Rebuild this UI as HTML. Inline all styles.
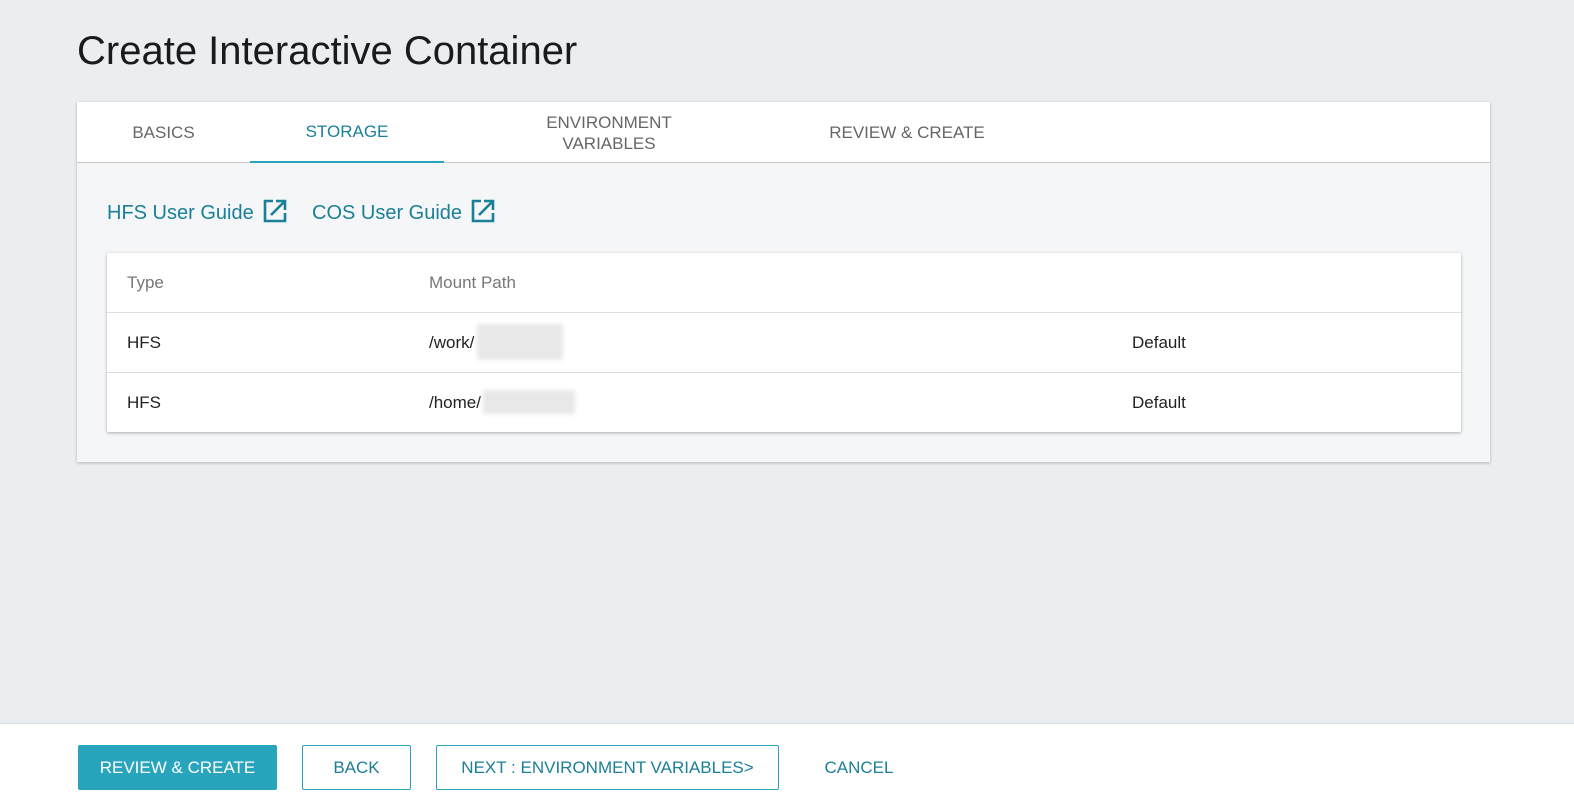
<!DOCTYPE html>
<html><head><style>
*{box-sizing:border-box;margin:0;padding:0}
body{width:1574px;height:812px;background:#ebeef1;font-family:"Liberation Sans",sans-serif;position:relative;overflow:hidden}
h1{position:absolute;left:77px;top:29px;font-size:40px;font-weight:400;color:#1a1a1a}
.card{position:absolute;left:77px;top:102px;width:1413px;height:360px;background:#f4f6f8;box-shadow:0 1px 3px rgba(0,0,0,.25)}
.tabs{height:61px;background:#fff;border-bottom:1px solid #c8c8c8;position:relative}
.tab{position:absolute;top:0;height:61px;display:flex;align-items:center;justify-content:center;text-align:center;font-size:17px;color:#666;line-height:21px}
.tab.act{color:#1b8099;border-bottom:2px solid #2aa3bc}
.link{position:absolute;top:100px;font-size:20px;color:#1b7f97;display:flex;align-items:center}
.link svg{margin-left:9px;margin-top:-6px}
.tbl{position:absolute;left:30px;top:151px;width:1354px;height:179px;background:#fff;box-shadow:0 1px 3px rgba(0,0,0,.3);border-radius:2px}
.row{position:absolute;left:0;width:100%;height:60px;border-bottom:1px solid #ddd;font-size:17px;color:#222}
.row span{position:absolute;top:20px}
.hdr{color:#777}
.blur{position:absolute;background:#e8e8e8;filter:blur(2px)}
.foot{position:absolute;left:0;top:723px;width:1574px;height:89px;background:#fff;border-top:1px solid #ddd}
.btn{position:absolute;top:21px;height:45px;font-size:17px;display:flex;align-items:center;justify-content:center;border:1px solid #2aa3bc;color:#1b7f97;border-radius:2px}
</style></head><body>
<h1>Create Interactive Container</h1>
<div class="card">
 <div class="tabs">
  <div class="tab" style="left:20px;width:133px">BASICS</div>
  <div class="tab act" style="left:173px;width:194px">STORAGE</div>
  <div class="tab" style="left:440px;width:184px">ENVIRONMENT<br>VARIABLES</div>
  <div class="tab" style="left:730px;width:200px">REVIEW &amp; CREATE</div>
 </div>
 <div class="link" style="left:30px">HFS User Guide<svg width="24" height="24" viewBox="0 0 24 24" fill="none" stroke="#1b7f97" stroke-width="2.6"><path d="M10 2H2v20h20v-8"/><path d="M8 16L21 3M13 2h9v9"/></svg></div>
 <div class="link" style="left:235px">COS User Guide<svg width="24" height="24" viewBox="0 0 24 24" fill="none" stroke="#1b7f97" stroke-width="2.6"><path d="M10 2H2v20h20v-8"/><path d="M8 16L21 3M13 2h9v9"/></svg></div>
 <div class="tbl">
  <div class="row hdr" style="top:0"><span style="left:20px">Type</span><span style="left:322px">Mount Path</span></div>
  <div class="row" style="top:60px"><span style="left:20px">HFS</span><span style="left:322px">/work/</span><div class="blur" style="left:370px;top:11px;width:86px;height:36px"></div><span style="left:1025px">Default</span></div>
  <div class="row" style="top:120px;border-bottom:none"><span style="left:20px">HFS</span><span style="left:322px">/home/</span><div class="blur" style="left:376px;top:17px;width:92px;height:24px"></div><span style="left:1025px">Default</span></div>
 </div>
</div>
<div class="foot">
 <div class="btn" style="left:78px;width:199px;background:#28a4bd;color:#fff;border-color:#28a4bd">REVIEW &amp; CREATE</div>
 <div class="btn" style="left:302px;width:109px">BACK</div>
 <div class="btn" style="left:436px;width:343px">NEXT : ENVIRONMENT VARIABLES&gt;</div>
 <div class="btn" style="left:805px;width:108px;border-color:transparent">CANCEL</div>
</div>
</body></html>
